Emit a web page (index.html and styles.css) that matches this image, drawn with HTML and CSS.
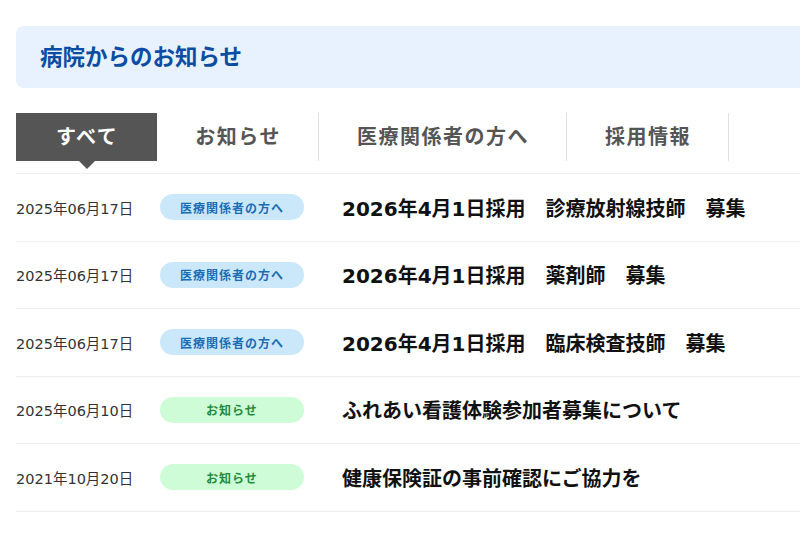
FILE: index.html
```html
<!DOCTYPE html>
<html lang="ja">

<head>
    <meta charset="utf-8">
    <title>病院からのお知らせ</title>
    <meta name="viewport" content="width=device-width, initial-scale=1">
    <link rel="stylesheet" href="styles.css">
</head>

<body>
    <div class="news">
        <div class="news-header">
            <h2 class="news-title">病院からのお知らせ</h2>
        </div>

        <ul class="tabs">
            <li class="tab active">すべて</li>
            <li class="tab">お知らせ</li>
            <li class="tab">医療関係者の方へ</li>
            <li class="tab">採用情報</li>
        </ul>

        <ul class="news-list">
            <li class="news-item">
                <span class="news-date">2025年06月17日</span>
                <span class="badge badge-medical">医療関係者の方へ</span>
                <a class="news-link" href="#">2026年4月1日採用　診療放射線技師　募集</a>
            </li>
            <li class="news-item">
                <span class="news-date">2025年06月17日</span>
                <span class="badge badge-medical">医療関係者の方へ</span>
                <a class="news-link" href="#">2026年4月1日採用　薬剤師　募集</a>
            </li>
            <li class="news-item">
                <span class="news-date">2025年06月17日</span>
                <span class="badge badge-medical">医療関係者の方へ</span>
                <a class="news-link" href="#">2026年4月1日採用　臨床検査技師　募集</a>
            </li>
            <li class="news-item">
                <span class="news-date">2025年06月10日</span>
                <span class="badge badge-info">お知らせ</span>
                <a class="news-link" href="#">ふれあい看護体験参加者募集について</a>
            </li>
            <li class="news-item">
                <span class="news-date">2021年10月20日</span>
                <span class="badge badge-info">お知らせ</span>
                <a class="news-link" href="#">健康保険証の事前確認にご協力を</a>
            </li>
        </ul>
    </div>
</body>

</html>
```

FILE: styles.css
```css
body {
    margin: 0;
    background: #fff;
    color: #222;
    font-family: "DejaVu Sans", "Noto Sans CJK JP", sans-serif;
    overflow: hidden;
}

.news {
    margin: 0 -40px 0 16px;
    padding-top: 26px;
}

.news-header {
    background: #e7f2fe;
    border-radius: 8px;
    height: 62px;
    display: flex;
    align-items: center;
    padding: 0 24px;
}

.news-title {
    margin: 0;
    color: #0b4da2;
    font-size: 22.5px;
    font-weight: bold;
    line-height: 1;
}

.tabs {
    list-style: none;
    margin: 25px 0 0;
    padding: 0 0 12px;
    display: flex;
    border-bottom: 1px solid #eee;
}

.tab {
    position: relative;
    height: 48px;
    box-sizing: border-box;
    display: flex;
    align-items: center;
    padding: 0 37px 4px 38px;
    font-size: 20px;
    font-weight: bold;
    letter-spacing: 1.5px;
    color: #555;
    border-right: 1px solid #e0e0e0;
    cursor: pointer;
}

.tab.active {
    background: #555;
    color: #fff;
    border-right: none;
    padding: 0 39px 4px 40px;
}

.tab.active::after {
    content: "";
    position: absolute;
    left: 50%;
    bottom: -8px;
    margin-left: -8px;
    border-left: 8px solid transparent;
    border-right: 8px solid transparent;
    border-top: 8px solid #555;
}

.news-list {
    list-style: none;
    margin: 0;
    padding: 0;
}

.news-item {
    height: 66.5px;
    display: flex;
    align-items: center;
    border-bottom: 1px solid #eee;
}

.news-date {
    width: 144px;
    font-size: 14.5px;
    color: #333;
}

.badge {
    width: 144px;
    height: 26px;
    border-radius: 13px;
    display: flex;
    align-items: center;
    justify-content: center;
    font-family: "Noto Sans CJK JP", sans-serif;
    font-size: 12px;
    font-weight: bold;
    letter-spacing: 1px;
    margin-right: 38px;
}

.badge-medical {
    background: #cbe8fb;
    color: #1b6db3;
}

.badge-info {
    background: #cdfcd6;
    color: #1f8a3c;
}

.news-link {
    font-size: 20px;
    font-weight: bold;
    color: #111;
    text-decoration: none;
}
```
